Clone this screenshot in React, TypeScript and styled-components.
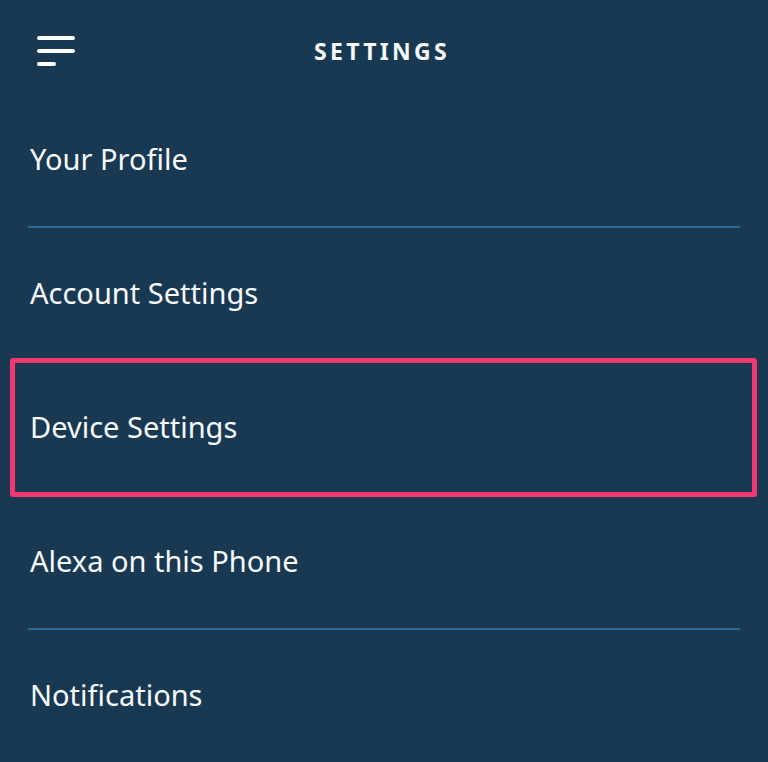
import React from "react";
import styled, { createGlobalStyle } from "styled-components";

const GlobalStyle = createGlobalStyle`
  html, body {
    margin: 0;
    padding: 0;
    background: #193953;
  }
  body {
    font-family: "Noto Sans", "Open Sans", sans-serif;
    color: #f7f9fa;
  }
`;

const Screen = styled.div`
  width: 768px;
  height: 762px;
  overflow: hidden;
  background: #193953;
  display: flex;
  flex-direction: column;
`;

const Header = styled.div`
  height: 94px;
  flex-shrink: 0;
  position: relative;
  display: flex;
  align-items: flex-start;
  justify-content: center;
`;

const MenuButton = styled.button`
  position: absolute;
  left: 37px;
  top: 36px;
  width: 38px;
  height: 32px;
  padding: 0;
  border: 0;
  background: none;
  display: flex;
  flex-direction: column;
  gap: 9px;
  cursor: pointer;
`;

const MenuLine = styled.span<{ $w: number }>`
  display: block;
  width: ${(p) => p.$w}px;
  height: 4px;
  border-radius: 2px;
  background: #ffffff;
`;

const Title = styled.h1`
  margin: 37px 0 0;
  padding-right: 4px;
  font-size: 23px;
  line-height: 28px;
  font-weight: 700;
  letter-spacing: 3.3px;
`;

const List = styled.div`
  display: flex;
  flex-direction: column;
`;

const Row = styled.div<{ $highlight?: boolean }>`
  position: relative;
  height: 132px;
  flex-shrink: 0;
  padding-left: 30px;
  display: flex;
  align-items: center;
  font-size: 29px;
  line-height: 1;
  padding-bottom: 3px;
  box-sizing: border-box;

  ${(p) =>
    p.$highlight &&
    `
    &::after {
      content: "";
      position: absolute;
      left: 10px;
      right: 11px;
      top: -4px;
      bottom: -3px;
      border: 5px solid #f2386c;
      border-radius: 3px;
      pointer-events: none;
    }
  `}
`;

const Divider = styled.div`
  height: 2px;
  flex-shrink: 0;
  margin: 0 28px;
  background: #2d6a96;
`;

const Spacer = styled.div`
  height: 2px;
  flex-shrink: 0;
`;

type Item = { label: string; divider?: boolean; highlight?: boolean };

const items: Item[] = [
  { label: "Your Profile", divider: true },
  { label: "Account Settings" },
  { label: "Device Settings", highlight: true },
  { label: "Alexa on this Phone", divider: true },
  { label: "Notifications" },
];

export default function App() {
  return (
    <Screen>
      <GlobalStyle />
      <Header>
        <MenuButton aria-label="Menu">
          <MenuLine $w={38} />
          <MenuLine $w={38} />
          <MenuLine $w={19} />
        </MenuButton>
        <Title>SETTINGS</Title>
      </Header>
      <List>
        {items.map((item, i) => (
          <React.Fragment key={item.label}>
            <Row $highlight={item.highlight}>{item.label}</Row>
            {i < items.length - 1 && (item.divider ? <Divider /> : <Spacer />)}
          </React.Fragment>
        ))}
      </List>
    </Screen>
  );
}
